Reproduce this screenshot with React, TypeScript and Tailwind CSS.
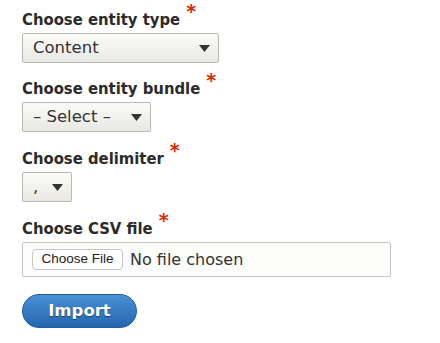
export default function App() {
  const label = "flex h-[24px] items-center text-[16.5px] font-bold text-[#2b2b2b] font-['DejaVu_Sans_Condensed','DejaVu_Sans',sans-serif] mb-[1px]";
  const star = "ml-[6px] self-start -mt-[6px] text-[#e32700] text-[19px] leading-none font-bold font-['DejaVu_Sans',sans-serif]";
  const select =
    "flex h-[30px] items-center justify-between rounded-[2px] border border-[#b9b9b4] bg-gradient-to-b from-[#fbfbf9] to-[#e9e8e3] pl-[10px] pr-[8px] text-[16.5px] text-[#333]";

  const Arrow = () => (
    <svg width="11" height="7" viewBox="0 0 11 7" className="shrink-0">
      <path d="M0 0 H11 L5.5 7 Z" fill="#333" />
    </svg>
  );

  return (
    <div className="h-[343px] w-[440px] bg-white pl-[22px] pt-[8px] font-['DejaVu_Sans',sans-serif]">
      <div className="mb-[14px]">
        <div className={label}>
          Choose entity type<span className={star}>*</span>
        </div>
        <div className={`${select} w-[197px]`}>
          <span>Content</span>
          <Arrow />
        </div>
      </div>

      <div className="mb-[15px]">
        <div className={label}>
          Choose entity bundle<span className={star}>*</span>
        </div>
        <div className={`${select} w-[129px]`}>
          <span>– Select –</span>
          <Arrow />
        </div>
      </div>

      <div className="mb-[15px]">
        <div className={label}>
          Choose delimiter<span className={star}>*</span>
        </div>
        <div className={`${select} w-[50px]`}>
          <span>,</span>
          <Arrow />
        </div>
      </div>

      <div className="mb-[17px]">
        <div className={label}>
          Choose CSV file<span className={star}>*</span>
        </div>
        <div className="flex h-[35px] w-[369px] items-center rounded-[2px] border border-[#c4c4c0] bg-[#fcfcfa] pl-[9px]">
          <div className="flex h-[21px] w-[91px] items-center justify-center rounded-[4px] border border-[#c6c6c6] bg-white text-[13.5px] text-[#222] font-['Liberation_Sans',sans-serif]">
            Choose File
          </div>
          <span className="ml-[7px] text-[16px] text-[#333]">No file chosen</span>
        </div>
      </div>

      <button className="flex h-[34px] w-[115px] items-center justify-center rounded-full border border-[#1e5c9f] bg-gradient-to-b from-[#4a90d4] to-[#2467af] text-[16.5px] font-bold text-white [text-shadow:0_1px_1px_rgba(0,0,0,0.45)]">
        Import
      </button>
    </div>
  );
}
